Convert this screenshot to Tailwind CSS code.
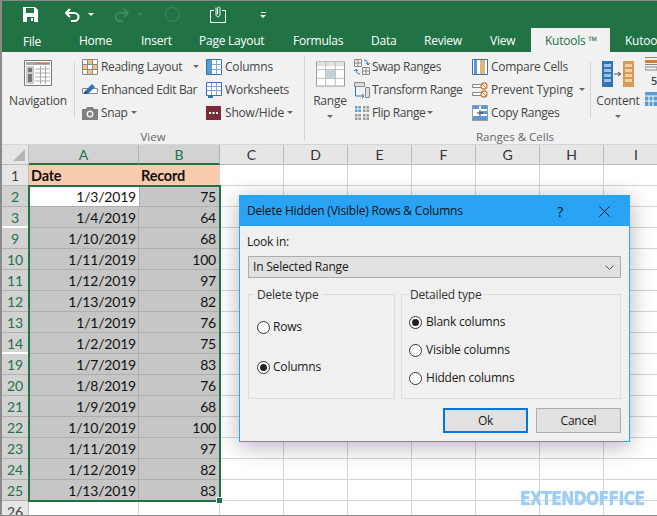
<!DOCTYPE html>
<html lang="en">
  <head>
    <meta charset="UTF-8" />
    <title>Delete Hidden (Visible) Rows &amp; Columns</title>
    <script src="https://cdn.jsdelivr.net/npm/@tailwindcss/browser@4"></script>
  </head>
  <body class="w-[657px] h-[516px] overflow-hidden bg-white font-['Open_Sans',sans-serif] text-[#444] text-[12px]">
    <div class="relative w-[657px] h-[516px] overflow-hidden border-l-2 border-t border-b border-[#8a8a8a] flex flex-col">

      <!-- Quick access bar -->
      <div class="h-[27px] bg-[#217346] flex items-center text-white shrink-0">
        <svg class="ml-[21px] w-[15px] h-[15px]" viewBox="0 0 15 15"><path d="M0 0h12l3 3v12H0z" fill="#fff"/><path d="M3 1h8v5H3zM4 10h7v5H4z" fill="#217346"/><path d="M8 11h2v3H8z" fill="#fff"/></svg>
        <svg class="ml-[27px] w-[15px] h-[14px]" viewBox="0 0 15 14" fill="none" stroke="#fff" stroke-width="2"><path d="M5 1 1 5l4 4"/><path d="M1 5h8c6 0 6 8 0 8H6"/></svg>
        <span class="ml-[8px] border-x-[3px] border-t-[3px] border-x-transparent border-t-white"></span>
        <svg class="ml-[20px] w-[15px] h-[14px]" viewBox="0 0 15 14" fill="none" stroke="#3f8a63" stroke-width="2"><path d="m10 1 4 4-4 4"/><path d="M14 5H6c-6 0-6 8 0 8h3"/></svg>
        <span class="ml-[8px] border-x-[3px] border-t-[3px] border-x-transparent border-t-[#3f8a63]"></span>
        <span class="ml-[22px] w-[15px] h-[15px] rounded-full border border-[#3f8a63]"></span>
        <svg class="ml-[30px] w-[16px] h-[17px]" viewBox="0 0 16 17" fill="none" stroke="#fff"><path d="M4 4.500H.5v12h15v-12H12M6 1.500v7c0 3 4 3 4 0v-6c0-2-2.500-2-2.500 0v6"/></svg>
        <span class="ml-[34px] flex flex-col items-center gap-[2px]"><span class="w-[5px] h-px bg-white"></span><span class="border-x-[3px] border-t-[3px] border-x-transparent border-t-white"></span></span>
      </div>

      <!-- Tabs -->
      <div class="h-[24px] bg-[#217346] flex items-end text-white text-[12px] tracking-[-0.25px] shrink-0 relative">
        <span class="absolute left-[21px] top-[5px]">File</span>
        <span class="absolute left-[77px] top-[4px]">Home</span>
        <span class="absolute left-[139px] top-[4px]">Insert</span>
        <span class="absolute left-[197px] top-[4px]">Page Layout</span>
        <span class="absolute left-[291px] top-[4px]">Formulas</span>
        <span class="absolute left-[369px] top-[4px]">Data</span>
        <span class="absolute left-[422px] top-[4px]">Review</span>
        <span class="absolute left-[488px] top-[4px]">View</span>
        <span class="absolute left-[529px] top-0 w-[79px] h-[24px] bg-[#f1f1f1] text-[#217346] pl-[14px] pt-[4px]">Kutools ™</span>
        <span class="absolute left-[623px] top-[4px]">Kutools</span>
      </div>

      <!-- Ribbon -->
      <div class="h-[93px] bg-[#f1f1f1] flex shrink-0 border-b border-[#d6d6d6] overflow-hidden">
        <!-- View group -->
        <div class="w-[302px] shrink-0 flex flex-col border-r-0">
          <div class="flex h-[78px]">
            <div class="w-[72px] flex flex-col items-center pt-[8px]">
              <svg class="w-[28px] h-[26px]" viewBox="0 0 28 26"><path d="M.5.500h27v25H.5z" fill="#fff" stroke="#777"/><path d="M2 2h24v3H2z" fill="#a9a9a9"/><path d="M11 3h14v1H11z" fill="#d0803a"/><path d="M2 6h8v18H2z" fill="#c9c9c9"/><path d="M4 8h4v4H4zM4 14h4v8H4z" fill="#777"/><path d="M11 9h15M11 13h15M11 17h15M11 21h15M16.500 6v18M21.500 6v18" stroke="#aaa"/></svg>
              <span class="mt-[6px] text-[12px] tracking-[-0.2px]">Navigation</span>
            </div>
            <div class="w-px h-[56px] mt-[10px] bg-[#d4d4d4]"></div>
            <div class="w-[124px] ml-[7px] flex flex-col pt-[3px] tracking-[-0.35px]">
              <div class="h-[23px] flex items-center gap-[3px]">
                <svg class="w-[16px] h-[16px] shrink-0" viewBox="0 0 16 16"><path d="M.5.500h15v15H.5z" fill="#fff" stroke="#888"/><path d="M6 1v14h4V1zM1 6h14v4H1z" fill="#f4c27f"/><path d="M5.500 1v14M10.500 1v14M1 5.500h14M1 10.500h14" stroke="#888"/></svg>
                <span>Reading Layout</span><span class="ml-[8px] border-x-[3px] border-t-[3px] border-x-transparent border-t-[#666]"></span>
              </div>
              <div class="h-[23px] flex items-center gap-[3px]">
                <svg class="w-[16px] h-[16px] shrink-0" viewBox="0 0 16 16"><path d="M.5 6.500h15v5H.5z" fill="#fff" stroke="#888"/><path d="m2 12 1-3 7-7 3 3-7 7z" fill="#2f75b5"/><path d="m2 12 1-3 2 2z" fill="#333"/></svg>
                <span class="whitespace-nowrap">Enhanced Edit Bar</span>
              </div>
              <div class="h-[23px] flex items-center gap-[3px]">
                <svg class="w-[16px] h-[14px] shrink-0" viewBox="0 0 16 14"><path d="M0 3h4l1-2h6l1 2h4v11H0z" fill="#808080"/><circle cx="8" cy="8" r="3.500" fill="#f1f1f1"/><circle cx="8" cy="8" r="2" fill="#808080"/></svg>
                <span>Snap</span><span class="border-x-[3px] border-t-[3px] border-x-transparent border-t-[#666]"></span>
              </div>
            </div>
            <div class="w-[98px] flex flex-col pt-[3px] tracking-[-0.2px]">
              <div class="h-[23px] flex items-center gap-[3px]">
                <svg class="w-[16px] h-[16px] shrink-0" viewBox="0 0 16 16"><path d="M.5.500h15v15H.5z" fill="#fff" stroke="#2f75b5"/><path d="M1 1h5v14H1z" fill="#5b9bd5"/><path d="M10.500 1v14M6 5.500h10M6 10.500h10" stroke="#7ba7d0"/></svg>
                <span>Columns</span>
              </div>
              <div class="h-[23px] flex items-center gap-[3px]">
                <svg class="w-[16px] h-[16px] shrink-0" viewBox="0 0 16 16"><path d="M.5.500h15v13H.5z" fill="#fff" stroke="#2f75b5"/><path d="M1 4.500h14M1 8.500h14M5.500 1v12M10.500 1v12" stroke="#7ba7d0"/><path d="M2 13h5v3H2z" fill="#2f75b5"/></svg>
                <span>Worksheets</span>
              </div>
              <div class="h-[23px] flex items-center gap-[3px]">
                <svg class="w-[15px] h-[14px] shrink-0" viewBox="0 0 15 14"><path d="M0 0h15v14H0z" fill="#7b2c38"/><path d="M3 6h2v2H3zM6.500 6h2v2h-2zM10 6h2v2h-2z" fill="#fff"/></svg>
                <span class="ml-[1px] whitespace-nowrap">Show/Hide</span><span class="border-x-[3px] border-t-[3px] border-x-transparent border-t-[#666]"></span>
              </div>
            </div>
          </div>
          <div class="text-center text-[#666] text-[11.500px] ml-0 leading-[14px]">View</div>
        </div>
        <div class="w-px h-[84px] mt-[4px] bg-[#d4d4d4] shrink-0"></div>

        <!-- Ranges & Cells group -->
        <div class="w-[285px] shrink-0 flex flex-col">
          <div class="flex h-[78px]">
            <div class="w-[50px] flex flex-col items-center pt-[9px]">
              <svg class="w-[29px] h-[26px]" viewBox="0 0 30 26"><path d="M.5.500h29v25H.5z" fill="#fff" stroke="#999"/><path d="M10 9h10v8H10z" fill="#c3d3de"/><path d="M1 1h28v4H1z" fill="#e2e2e2"/><path d="M1 8.500h28M1 17.500h28M10 1v24M20 1v24" stroke="#bbb"/></svg>
              <span class="mt-[5px] tracking-[-0.2px]">Range</span>
              <span class="mt-[5px] border-x-[3px] border-t-[3px] border-x-transparent border-t-[#666]"></span>
            </div>
            <div class="w-[118px] ml-[-1px] flex flex-col pt-[3px] tracking-[-0.4px]">
              <div class="h-[23px] flex items-center gap-[2px]">
                <svg class="w-[16px] h-[16px] shrink-0" viewBox="0 0 16 16" fill="none"><path d="M.5.500h7v7h-7zM8.500 8.500h7v7h-7zM4 1v6M1 4h6M12 9v6M9 12h6" stroke="#888"/><path d="M10 1c3 0 4 2 4 5M12 4l2 2 2-2M6 15c-3 0-4-2-4-5M0 12l2-2 2 2" stroke="#2f75b5"/></svg>
                <span class="whitespace-nowrap">Swap Ranges</span>
              </div>
              <div class="h-[23px] flex items-center gap-[2px]">
                <svg class="w-[16px] h-[16px] shrink-0" viewBox="0 0 16 16" fill="none"><path d="M.5.500h10v4H.5zM11.500 5.500h4v10h-4z" fill="#ddd" stroke="#888"/><path d="M1.500 5v9h8M8 12l2 2-2 2" stroke="#2f75b5"/></svg>
                <span class="whitespace-nowrap">Transform Range</span>
              </div>
              <div class="h-[23px] flex items-center gap-[2px]">
                <svg class="w-[16px] h-[16px] shrink-0" viewBox="0 0 16 16"><path d="M1 1h6v6H1z" fill="#5b9bd5"/><path d="M9 1h6v6H9zM1 9h6v6H1zM9 9h6v6H9z" fill="#999"/><path d="M4 1v6M1 4h6M12 1v6M9 4h6M4 9v6M1 12h6M12 9v6M9 12h6" stroke="#f1f1f1"/></svg>
                <span class="whitespace-nowrap">Flip Range</span><span class="border-x-[3px] border-t-[3px] border-x-transparent border-t-[#666]"></span>
              </div>
            </div>
            <div class="w-[117px] flex flex-col pt-[3px] tracking-[-0.3px]">
              <div class="h-[23px] flex items-center gap-[3px]">
                <svg class="w-[16px] h-[16px] shrink-0" viewBox="0 0 16 16"><path d="M.5.500h15v15H.5z" fill="#fff" stroke="#2f75b5"/><path d="M2 1h3v14H2z" fill="#5b9bd5"/><path d="M8 1h5v14H8z" fill="#e3b778"/></svg>
                <span class="whitespace-nowrap">Compare Cells</span>
              </div>
              <div class="h-[23px] flex items-center gap-[3px]">
                <svg class="w-[16px] h-[16px] shrink-0" viewBox="0 0 16 16" fill="none"><path d="M.5 2.500h9v3h-9zM.5 10.500h9v3h-9z" fill="#fff" stroke="#888"/><circle cx="12" cy="4" r="3" fill="#fff" stroke="#d0803a" stroke-width="1.300"/><circle cx="12" cy="12" r="3" fill="#fff" stroke="#d0803a" stroke-width="1.300"/><path d="m10 2 4 4M10 10l4 4" stroke="#d0803a"/></svg>
                <span class="whitespace-nowrap tracking-[-0.1px]">Prevent Typing</span><span class="ml-[3px] border-x-[3px] border-t-[3px] border-x-transparent border-t-[#666]"></span>
              </div>
              <div class="h-[23px] flex items-center gap-[3px]">
                <svg class="w-[16px] h-[16px] shrink-0" viewBox="0 0 16 16"><path d="M.5.500h15v15H.5z" fill="#fff" stroke="#999"/><path d="M1 1h6v3H1zM9 1h6v3H9zM9 6h6v3H9zM1 11h14v4H1z" fill="#5b9bd5"/><path d="M5 8h6M8 5v6" stroke="#333"/></svg>
                <span class="whitespace-nowrap">Copy Ranges</span>
              </div>
            </div>
          </div>
          <div class="text-center text-[#666] text-[11.500px] leading-[14px] ml-[135px]">Ranges &amp; Cells</div>
        </div>
        <div class="w-px h-[56px] mt-[10px] bg-[#d4d4d4] shrink-0"></div>

        <!-- Content group, cut off by the window -->
        <div class="w-[52px] ml-[1px] shrink-0 flex flex-col items-center pt-[9px]">
          <svg class="w-[32px] h-[26px]" viewBox="0 0 32 26"><path d="M0 0h11v26H0z" fill="#2f75b5"/><path d="M21 0h11v26H21z" fill="#d69a55"/><path d="M2 3h7v3H2zM2 8h7v3H2zM2 13h7v3H2zM2 18h7v3H2z" fill="#9dc3e6"/><path d="M23 3h7v3h-7zM23 8h7v3h-7zM23 13h7v3h-7zM23 18h7v3h-7z" fill="#f4d0a0"/><path d="M12 13h6M16 11l3 2-3 2" stroke="#555" fill="none"/></svg>
          <span class="mt-[5px] tracking-[-0.2px]">Content</span>
          <span class="mt-[5px] border-x-[3px] border-t-[3px] border-x-transparent border-t-[#666]"></span>
        </div>
        <div class="w-[14px] shrink-0 flex flex-col gap-[3px] pt-[5px] pl-[1px]">
          <svg class="w-[12px] h-[14px] shrink-0" viewBox="0 0 12 14" fill="none"><path d="M0 .5h12M0 7.500h12" stroke="#888"/><path d="M0 3h12v3H0z" fill="#d0803a"/><path d="M0 10h12v3H0z" stroke="#888"/></svg>
          <span class="text-[11px] leading-[14px] font-semibold pl-[6px]">5</span>
          <svg class="w-[12px] h-[14px] shrink-0 mt-[1px]" viewBox="0 0 12 14"><path d="M0 0h12v14H0z" fill="#5b9bd5"/><path d="M4 4v10M8 4v10M0 4h12M0 9h12" stroke="#fff"/></svg>
        </div>
      </div>

      <!-- Column headers -->
      <div class="h-[20px] flex shrink-0 bg-[#e6e6e6] text-[14px] font-['Lato',sans-serif] leading-[20px] text-[#333] text-center">
        <div class="w-[27px] shrink-0 border-r border-[#bbb] border-b relative"><span class="absolute right-[3px] bottom-[3px] border-l-[12px] border-b-[12px] border-l-transparent border-b-[#b5b5b5]"></span></div>
        <div class="w-[110px] shrink-0 bg-[#d2d2d2] border-r border-[#b0b0b0] border-b-2 border-b-[#217346] text-[#217346]">A</div>
        <div class="w-[81px] shrink-0 bg-[#d2d2d2] border-r border-[#b0b0b0] border-b-2 border-b-[#217346] text-[#217346]">B</div>
        <div class="w-[64px] shrink-0 border-r border-[#bbb] border-b border-b-[#bbb]">C</div>
        <div class="w-[64px] shrink-0 border-r border-[#bbb] border-b border-b-[#bbb]">D</div>
        <div class="w-[64px] shrink-0 border-r border-[#bbb] border-b border-b-[#bbb]">E</div>
        <div class="w-[64px] shrink-0 border-r border-[#bbb] border-b border-b-[#bbb]">F</div>
        <div class="w-[64px] shrink-0 border-r border-[#bbb] border-b border-b-[#bbb]">G</div>
        <div class="w-[64px] shrink-0 border-r border-[#bbb] border-b border-b-[#bbb]">H</div>
        <div class="w-[64px] shrink-0 border-b border-b-[#bbb]">I</div>
      </div>

      <!-- Sheet -->
      <div class="flex flex-1 relative font-['Lato',sans-serif] text-[14px] tracking-[-0.2px] leading-[22px] text-[#111] overflow-hidden">
        <div class="w-[218px] shrink-0 grid grid-cols-[27px_110px_81px] auto-rows-[21px]">
          <div class="bg-[#e6e6e6] border-r border-b border-[#bbb] text-center text-[14px] text-[#444]">1</div>
          <div class="bg-[#f8cbad] pl-[2px] font-bold text-[14.500px]">Date</div>
          <div class="bg-[#f8cbad] pl-[2px] font-bold text-[14.500px] border-r border-[#d4d4d4]">Record</div>

          <div class="bg-[#d2d2d2] border-r border-b border-[#b0b0b0] text-center text-[14px] text-[#217346]">2</div>
          <div class="bg-white border-b border-[#aeaeae] text-right pr-[3px]">1/3/2019</div>
          <div class="bg-[#c6c6c6] border-l border-b border-[#aeaeae] text-right pr-[4px]">75</div>

          <div class="bg-[#d2d2d2] border-r border-b-2 border-b-white border-[#b0b0b0] text-center text-[14px] text-[#217346]">3</div>
          <div class="bg-[#c6c6c6] border-r border-b border-[#aeaeae] text-right pr-[2px]">1/4/2019</div>
          <div class="bg-[#c6c6c6] border-b border-[#aeaeae] text-right pr-[4px]">64</div>

          <div class="bg-[#d2d2d2] border-r border-b border-[#b0b0b0] text-center text-[14px] text-[#217346]">9</div>
          <div class="bg-[#c6c6c6] border-r border-b border-[#aeaeae] text-right pr-[2px]">1/10/2019</div>
          <div class="bg-[#c6c6c6] border-b border-[#aeaeae] text-right pr-[4px]">68</div>

          <div class="bg-[#d2d2d2] border-r border-b border-[#b0b0b0] text-center text-[14px] text-[#217346]">10</div>
          <div class="bg-[#c6c6c6] border-r border-b border-[#aeaeae] text-right pr-[2px]">1/11/2019</div>
          <div class="bg-[#c6c6c6] border-b border-[#aeaeae] text-right pr-[4px]">100</div>

          <div class="bg-[#d2d2d2] border-r border-b border-[#b0b0b0] text-center text-[14px] text-[#217346]">11</div>
          <div class="bg-[#c6c6c6] border-r border-b border-[#aeaeae] text-right pr-[2px]">1/12/2019</div>
          <div class="bg-[#c6c6c6] border-b border-[#aeaeae] text-right pr-[4px]">97</div>

          <div class="bg-[#d2d2d2] border-r border-b border-[#b0b0b0] text-center text-[14px] text-[#217346]">12</div>
          <div class="bg-[#c6c6c6] border-r border-b border-[#aeaeae] text-right pr-[2px]">1/13/2019</div>
          <div class="bg-[#c6c6c6] border-b border-[#aeaeae] text-right pr-[4px]">82</div>

          <div class="bg-[#d2d2d2] border-r border-b border-[#b0b0b0] text-center text-[14px] text-[#217346]">13</div>
          <div class="bg-[#c6c6c6] border-r border-b border-[#aeaeae] text-right pr-[2px]">1/1/2019</div>
          <div class="bg-[#c6c6c6] border-b border-[#aeaeae] text-right pr-[4px]">76</div>

          <div class="bg-[#d2d2d2] border-r border-b-2 border-b-white border-[#b0b0b0] text-center text-[14px] text-[#217346]">14</div>
          <div class="bg-[#c6c6c6] border-r border-b border-[#aeaeae] text-right pr-[2px]">1/2/2019</div>
          <div class="bg-[#c6c6c6] border-b border-[#aeaeae] text-right pr-[4px]">75</div>

          <div class="bg-[#d2d2d2] border-r border-b border-[#b0b0b0] text-center text-[14px] text-[#217346]">19</div>
          <div class="bg-[#c6c6c6] border-r border-b border-[#aeaeae] text-right pr-[2px]">1/7/2019</div>
          <div class="bg-[#c6c6c6] border-b border-[#aeaeae] text-right pr-[4px]">83</div>

          <div class="bg-[#d2d2d2] border-r border-b border-[#b0b0b0] text-center text-[14px] text-[#217346]">20</div>
          <div class="bg-[#c6c6c6] border-r border-b border-[#aeaeae] text-right pr-[2px]">1/8/2019</div>
          <div class="bg-[#c6c6c6] border-b border-[#aeaeae] text-right pr-[4px]">76</div>

          <div class="bg-[#d2d2d2] border-r border-b border-[#b0b0b0] text-center text-[14px] text-[#217346]">21</div>
          <div class="bg-[#c6c6c6] border-r border-b border-[#aeaeae] text-right pr-[2px]">1/9/2019</div>
          <div class="bg-[#c6c6c6] border-b border-[#aeaeae] text-right pr-[4px]">68</div>

          <div class="bg-[#d2d2d2] border-r border-b border-[#b0b0b0] text-center text-[14px] text-[#217346]">22</div>
          <div class="bg-[#c6c6c6] border-r border-b border-[#aeaeae] text-right pr-[2px]">1/10/2019</div>
          <div class="bg-[#c6c6c6] border-b border-[#aeaeae] text-right pr-[4px]">100</div>

          <div class="bg-[#d2d2d2] border-r border-b border-[#b0b0b0] text-center text-[14px] text-[#217346]">23</div>
          <div class="bg-[#c6c6c6] border-r border-b border-[#aeaeae] text-right pr-[2px]">1/11/2019</div>
          <div class="bg-[#c6c6c6] border-b border-[#aeaeae] text-right pr-[4px]">97</div>

          <div class="bg-[#d2d2d2] border-r border-b border-[#b0b0b0] text-center text-[14px] text-[#217346]">24</div>
          <div class="bg-[#c6c6c6] border-r border-b border-[#aeaeae] text-right pr-[2px]">1/12/2019</div>
          <div class="bg-[#c6c6c6] border-b border-[#aeaeae] text-right pr-[4px]">82</div>

          <div class="bg-[#d2d2d2] border-r border-b border-[#b0b0b0] text-center text-[14px] text-[#217346]">25</div>
          <div class="bg-[#c6c6c6] border-r border-b border-[#aeaeae] text-right pr-[2px]">1/13/2019</div>
          <div class="bg-[#c6c6c6] border-b border-[#aeaeae] text-right pr-[4px]">83</div>

          <div class="bg-[#e6e6e6] border-r border-[#bbb] text-center text-[14px] text-[#444]">26</div>
          <div class="border-r border-[#d4d4d4]"></div>
          <div class="border-r border-[#d4d4d4]"></div>
        </div>
        <!-- empty cells -->
        <div class="flex-1 bg-[linear-gradient(to_bottom,transparent_20px,#d4d4d4_20px),linear-gradient(to_right,transparent_63px,#d4d4d4_63px)] bg-[size:64px_21px] bg-[position:0_0]"></div>

        <!-- Selection outline and fill handle -->
        <div class="absolute left-[26px] top-[20px] w-[193px] h-[317px] border-2 border-[#217346] pointer-events-none"></div>
        <div class="absolute left-[214px] top-[332px] w-[5px] h-[5px] bg-[#217346] border border-white box-content"></div>
      </div>

      <!-- Watermark -->
      <div class="absolute left-[518px] top-[489px] font-['DejaVu_Sans',sans-serif] font-bold text-[15.500px] leading-[18px] tracking-[-0.6px] text-[#9fcdf5] blur-[0.5px] scale-y-125 [text-shadow:0_0_1px_#9fcdf5]">EXTENDOFFICE</div>

      <!-- Dialog -->
      <div class="absolute left-[237px] top-[194px] w-[391px] h-[247px] bg-[#f0f0f0] border border-[#2aa4f4] shadow-[0_4px_22px_rgba(0,0,0,0.3)] flex flex-col font-['Open_Sans',sans-serif] text-[12px] text-[#1a1a1a] tracking-[-0.2px]">
        <div class="h-[30px] bg-[#29a4f5] flex items-center pl-[7px] shrink-0 text-[#111]">
          <span class="flex-1">Delete Hidden (Visible) Rows &amp; Columns</span>
          <span class="text-[14px] mr-[36px]">?</span>
          <svg class="w-[11px] h-[11px] mr-[19px]" viewBox="0 0 11 11" fill="none" stroke="#111"><path d="m.5.500 10 10M10.500.500l-10 10"/></svg>
        </div>
        <div class="flex-1 px-[7px] flex flex-col">
          <div class="mt-[7px] leading-[17px]">Look in:</div>
          <div class="mt-[6px] ml-px w-[373px] h-[22px] bg-[#e1e1e1] border border-[#adadad] flex items-center justify-between pl-[4px] pr-[6px]">
            <span>In Selected Range</span>
            <svg class="w-[9px] h-[5px]" viewBox="0 0 9 5" fill="none" stroke="#555"><path d="m.5.500 4 4 4-4"/></svg>
          </div>
          <div class="mt-[16px] ml-px flex gap-[6px]">
            <div class="relative w-[147px] h-[105px] border border-[#dcdcdc]">
              <span class="absolute left-[5px] top-[-8px] px-[3px] bg-[#f0f0f0] leading-[15px] text-[#333]">Delete type</span>
              <div class="absolute left-[8px] top-[25px] flex items-center gap-[3px] leading-[14px]"><span class="w-[13px] h-[13px] rounded-full border border-[#333] bg-white"></span>Rows</div>
              <div class="absolute left-[8px] top-[65px] flex items-center gap-[3px] leading-[14px]"><span class="w-[13px] h-[13px] rounded-full border border-[#333] bg-white flex items-center justify-center"><span class="w-[7px] h-[7px] rounded-full bg-[#222]"></span></span>Columns</div>
            </div>
            <div class="relative w-[220px] h-[105px] border border-[#dcdcdc]">
              <span class="absolute left-[5px] top-[-8px] px-[3px] bg-[#f0f0f0] leading-[15px] text-[#333]">Detailed type</span>
              <div class="absolute left-[7px] top-[20px] flex items-center gap-[4px] leading-[14px]"><span class="w-[13px] h-[13px] rounded-full border border-[#333] bg-white flex items-center justify-center"><span class="w-[7px] h-[7px] rounded-full bg-[#222]"></span></span>Blank columns</div>
              <div class="absolute left-[7px] top-[48px] flex items-center gap-[4px] leading-[14px]"><span class="w-[13px] h-[13px] rounded-full border border-[#333] bg-white"></span>Visible columns</div>
              <div class="absolute left-[7px] top-[76px] flex items-center gap-[4px] leading-[14px]"><span class="w-[13px] h-[13px] rounded-full border border-[#333] bg-white"></span>Hidden columns</div>
            </div>
          </div>
          <div class="mt-[9px] ml-px w-[373px] flex justify-end gap-[8px]">
            <div class="w-[85px] h-[25px] bg-[#e1e1e1] border-2 border-[#0078d7] flex items-center justify-center">Ok</div>
            <div class="w-[85px] h-[25px] bg-[#e1e1e1] border border-[#adadad] flex items-center justify-center">Cancel</div>
          </div>
        </div>
      </div>
    </div>
  </body>
</html>
